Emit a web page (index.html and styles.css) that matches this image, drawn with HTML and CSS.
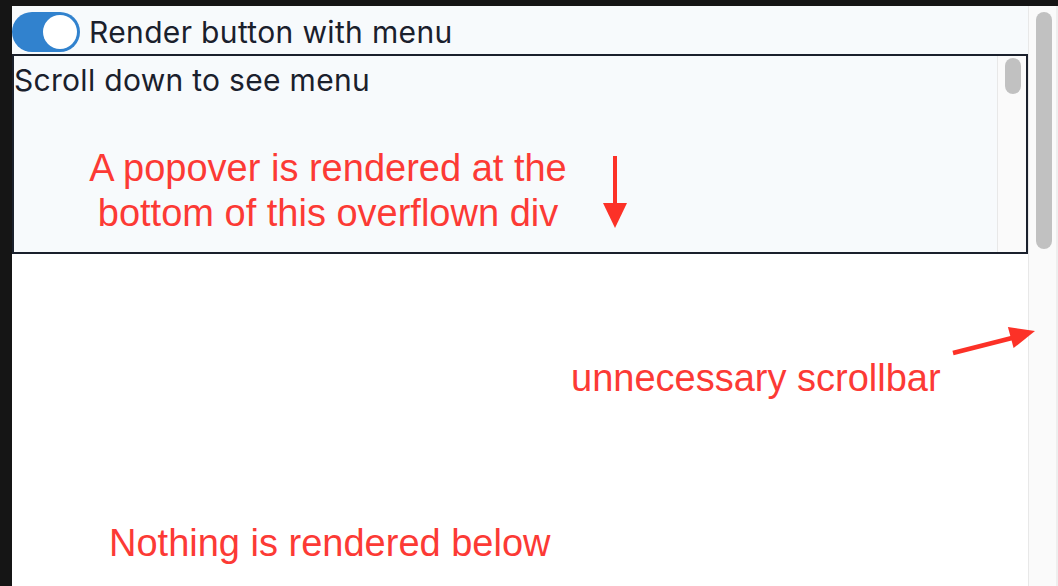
FILE: index.html
```html
<!DOCTYPE html>
<html lang="en">
  <head>
    <meta charset="UTF-8" />
    <meta name="viewport" content="width=device-width, initial-scale=1" />
    <title>Popover in overflow</title>
    <link rel="stylesheet" href="styles.css">
  </head>
  <body>
    <div class="window">
      <div class="page">
        <div class="header">
          <label class="switch">
            <input type="checkbox" checked />
            <span class="track"><span class="knob"></span></span>
          </label>
          <span class="label">Render button with menu</span>
        </div>
        <div class="scroll-box">
          <div class="scroll-content">Scroll down to see menu</div>
          <div class="scrollbar inner">
            <div class="thumb inner-thumb"></div>
          </div>
        </div>
      </div>
      <div class="scrollbar page-bar">
        <div class="thumb page-thumb"></div>
      </div>

      <!-- notes drawn over the page -->
      <div class="note note-popover">A popover is rendered at the<br />bottom of this overflown div</div>
      <div class="note note-scrollbar">unnecessary scrollbar</div>
      <div class="note note-below">Nothing is rendered below</div>
      <svg class="arrows" width="1046" height="580" viewBox="0 0 1046 580">
        <line x1="603" y1="150" x2="603" y2="200" stroke="#fc3127" stroke-width="4" />
        <polygon points="591,197 615,197 603,222" fill="#fc3127" />
        <line x1="941" y1="347" x2="1000" y2="332" stroke="#fc3127" stroke-width="4.5" />
        <polygon points="1023,325 1001.6,342.1 995.9,320.9" fill="#fc3127" />
      </svg>
    </div>
  </body>
</html>
```

FILE: styles.css
```css
body {
  margin: 0;
  padding: 0;
  background-color: #151515;
  height: 586px;
  overflow: hidden;
  font-family: Inter, "Noto Sans", sans-serif;
  color: #1a202c;
}

.window {
  position: relative;
  display: flex;
  margin: 6px 0 0 12px;
  height: 580px;
  background: white;
}

.page {
  flex: 1;
  display: flex;
  flex-direction: column;
}

.header {
  display: flex;
  align-items: flex-start;
  gap: 9px;
  height: 48px;
  padding-top: 6px;
  box-sizing: border-box;
  background: #f7fafc;
}

.switch input {
  display: none;
}

.switch .track {
  display: flex;
  align-items: center;
  justify-content: flex-end;
  width: 68px;
  height: 40px;
  padding: 0 3px;
  box-sizing: border-box;
  border-radius: 20px;
  background: #3182ce;
}

.switch .knob {
  width: 34px;
  height: 34px;
  border-radius: 50%;
  background: white;
}

.label {
  font-size: 30px;
  letter-spacing: 0.35px;
  line-height: 40px;
}

.scroll-box {
  display: flex;
  height: 200px;
  box-sizing: border-box;
  border: 2px solid #1a202c;
  background: #f7fafc;
}

.scroll-content {
  flex: 1;
  font-size: 30px;
  letter-spacing: 0.3px;
  line-height: 48px;
}

.scrollbar {
  box-sizing: border-box;
  background: #fafafa;
  border-left: 1px solid #e8e8e8;
}

.scrollbar.inner {
  width: 29px;
  padding: 2px 0 0 7px;
}

.thumb {
  width: 16px;
  border-radius: 8px;
  background: #c1c1c1;
}

.inner-thumb {
  height: 36px;
}

.page-bar {
  width: 30px;
  padding: 6px 0 0 7px;
  border-right: 2px solid #eeeeee;
}

.page-thumb {
  height: 237px;
}

.note {
  position: absolute;
  font-family: "Liberation Sans", Arial, sans-serif;
  font-size: 38px;
  line-height: 45px;
  color: #fc3a35;
  white-space: nowrap;
}

.note-popover {
  left: 66px;
  top: 140px;
  width: 500px;
  text-align: center;
}

.note-scrollbar {
  left: 559px;
  top: 350px;
}

.note-below {
  left: 97px;
  top: 515px;
}

.arrows {
  position: absolute;
  left: 0;
  top: 0;
  pointer-events: none;
}
```
